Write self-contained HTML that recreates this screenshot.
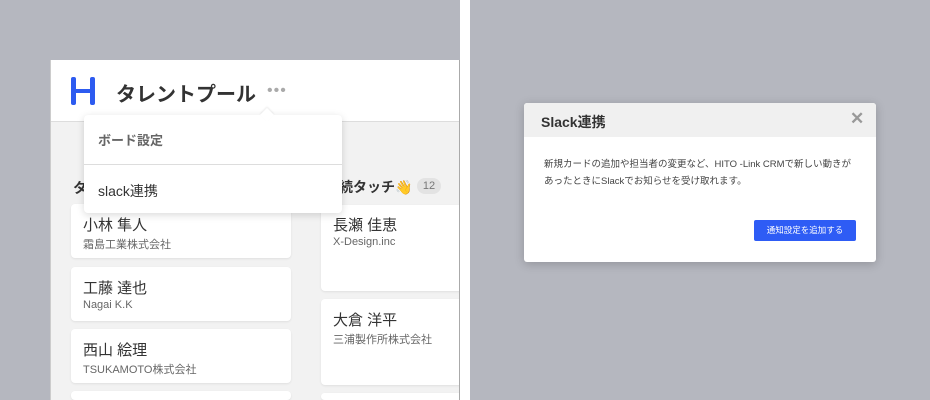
<!DOCTYPE html>
<html style="overflow:hidden;height:400px"><head><meta charset="utf-8"><style>
*{box-sizing:border-box;margin:0;padding:0}
body{width:930px;height:400px;overflow:hidden;background:#b5b7bf;position:relative;font-family:"Liberation Sans","Noto Sans CJK JP",sans-serif;color:#333}
.abs{position:absolute}
.strip{left:460px;top:0;width:10px;height:400px;background:#fff}
.panel{left:50px;top:60px;width:410px;height:340px;background:#f2f2f2;border-left:1px solid #ccc;border-right:1px solid #aaa;overflow:hidden}
.head{left:0;top:0;width:410px;height:62px;background:#fff;border-bottom:1px solid #ddd}
.card{background:#fff;border-radius:4px;box-shadow:0 1px 2px rgba(0,0,0,.08)}
.nm{font-size:15px;color:#333;position:absolute;left:12px}
.co{font-size:11px;color:#666;position:absolute;left:12px}
.menu{left:84px;top:115px;width:258px;height:98px;background:#fff;border-radius:4px;box-shadow:0 2px 8px rgba(0,0,0,.15)}
.modal{left:524px;top:103px;width:352px;height:159px;background:#fff;border-radius:3px;box-shadow:0 2px 10px rgba(0,0,0,.2);overflow:hidden}
</style></head><body>
<div class="abs strip"></div>
<div class="abs panel">
 <div class="abs head">
  <svg class="abs" style="left:20px;top:17px" width="26" height="28"><rect x="0" y="0" width="5" height="28" rx="2" fill="#2d5bf0"/><rect x="19" y="0" width="5" height="28" rx="2" fill="#2d5bf0"/><rect x="2" y="12" width="20" height="4" fill="#2d5bf0"/></svg>
  <div class="abs" style="left:65px;top:18px;font-size:20px;font-weight:bold;color:#333">タレントプール</div>
  <div class="abs" style="left:216px;top:22px;font-size:16px;color:#aaa;letter-spacing:1px">•••</div>
 </div>
 <div class="abs" style="left:22px;top:118px;font-size:14px;font-weight:bold">タ</div>
 <div class="abs" style="left:288px;top:117px;font-size:14px;font-weight:bold">続タッチ👋</div>
 <div class="abs" style="left:366px;top:118px;width:24px;height:16px;border-radius:8px;background:#e3e3e3;font-size:11px;color:#777;text-align:center;line-height:16px">12</div>
 <div class="abs card" style="left:20px;top:144px;width:220px;height:54px"><div class="nm" style="top:10px">小林 隼人</div><div class="co" style="top:32px">霜島工業株式会社</div></div>
 <div class="abs card" style="left:20px;top:207px;width:220px;height:54px"><div class="nm" style="top:10px">工藤 達也</div><div class="co" style="top:32px">Nagai K.K</div></div>
 <div class="abs card" style="left:20px;top:269px;width:220px;height:54px"><div class="nm" style="top:10px">西山 絵理</div><div class="co" style="top:32px">TSUKAMOTO株式会社</div></div>
 <div class="abs card" style="left:20px;top:331px;width:220px;height:9px"></div>
 <div class="abs card" style="left:270px;top:145px;width:150px;height:86px"><div class="nm" style="top:9px">長瀬 佳恵</div><div class="co" style="top:31px">X-Design.inc</div></div>
 <div class="abs card" style="left:270px;top:239px;width:150px;height:86px"><div class="nm" style="top:10px">大倉 洋平</div><div class="co" style="top:32px">三浦製作所株式会社</div></div>
 <div class="abs card" style="left:270px;top:333px;width:150px;height:7px"></div>
</div>
<div class="abs menu">
 <div class="abs" style="left:178px;top:-5px;width:10px;height:10px;background:#fff;transform:rotate(45deg);box-shadow:-1px -1px 2px rgba(0,0,0,.08)"></div>
 <div class="abs" style="left:14px;top:15px;font-size:13px;font-weight:bold;color:#666">ボード設定</div>
 <div class="abs" style="left:0;top:49px;width:258px;height:1px;background:#ddd"></div>
 <div class="abs" style="left:14px;top:66px;font-size:14px;color:#333">slack連携</div>
</div>
<div class="abs modal">
 <div class="abs" style="left:0;top:0;width:352px;height:34px;background:#f0f0f0"></div>
 <div class="abs" style="left:17px;top:9px;font-size:14px;font-weight:bold;color:#333">Slack連携</div>
 <div class="abs" style="left:326px;top:6px;font-size:17px;color:#999;font-weight:bold">✕</div>
 <div class="abs" style="left:20px;top:53px;font-size:9.5px;line-height:17px;color:#444;width:320px">新規カードの追加や担当者の変更など、HITO -Link CRMで新しい動きが<br>あったときにSlackでお知らせを受け取れます。</div>
 <div class="abs" style="left:230px;top:117px;width:102px;height:21px;background:#2e5cf5;border-radius:2px;color:#fff;font-size:8.5px;text-align:center;line-height:21px">通知設定を追加する</div>
</div>
</body></html>
